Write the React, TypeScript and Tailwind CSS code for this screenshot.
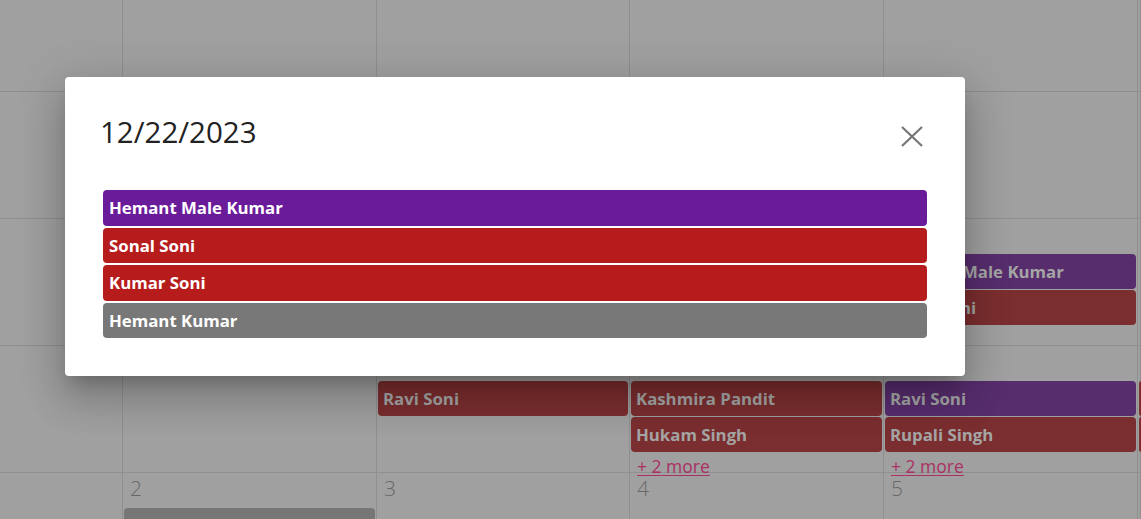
import React from "react";

type Ev = { name: string; color: "purple" | "red" | "gray" };
type Cell = { day?: number; events?: Ev[]; more?: number };

const bgColor: Record<Ev["color"], string> = {
  purple: "bg-[#572d6e]",
  red: "bg-[#7b2e2f]",
  gray: "bg-[#767676]",
};

const modalColor: Record<Ev["color"], string> = {
  purple: "bg-[#6a1b9a]",
  red: "bg-[#b71c1c]",
  gray: "bg-[#787878]",
};

const weeks: Cell[][] = [
  [{}, {}, {}, {}, {}, {}],
  [{}, {}, {}, {}, {}, {}],
  [
    {},
    {},
    {},
    {},
    {
      events: [
        { name: "Hemant Male Kumar", color: "purple" },
        { name: "Sonal Soni", color: "red" },
      ],
    },
    {},
  ],
  [
    {},
    {},
    { events: [{ name: "Ravi Soni", color: "red" }] },
    {
      events: [
        { name: "Kashmira Pandit", color: "red" },
        { name: "Hukam Singh", color: "red" },
      ],
      more: 2,
    },
    {
      events: [
        { name: "Ravi Soni", color: "purple" },
        { name: "Rupali Singh", color: "red" },
      ],
      more: 2,
    },
    {
      events: [
        { name: "", color: "red" },
        { name: "", color: "red" },
      ],
    },
  ],
  [
    {},
    { day: 2, events: [{ name: "", color: "gray" }] },
    { day: 3 },
    { day: 4 },
    { day: 5 },
    {},
  ],
];

const modalEvents: Ev[] = [
  { name: "Hemant Male Kumar", color: "purple" },
  { name: "Sonal Soni", color: "red" },
  { name: "Kumar Soni", color: "red" },
  { name: "Hemant Kumar", color: "gray" },
];

function CalendarCell({ cell, first }: { cell: Cell; first: boolean }) {
  return (
    <div className="border-r border-b border-[#8f8f8f] min-w-0 px-[1px]">
      {!first && (
        <div className="pt-[1px] h-[29px] pl-[6px] text-[21px] leading-[28px] font-light text-[#686868] whitespace-nowrap">
          {cell.day !== undefined ? cell.day : ""}
        </div>
      )}
      {cell.events && (
        <div className="mt-[6px] flex flex-col gap-[1.5px]">
          {cell.events.map((e, i) => (
            <div
              key={i}
              className={`${bgColor[e.color]} h-[34.5px] rounded-[4px] flex items-center pl-[5px] text-[16.8px] font-bold text-[#a5a5a5] whitespace-nowrap overflow-hidden`}
            >
              {e.name}
            </div>
          ))}
        </div>
      )}
      {cell.more ? (
        <div className="mt-[2px] pl-[6px] text-[17.5px] leading-[24px] text-[#aa3064] underline underline-offset-[2px] whitespace-nowrap">
          + {cell.more} more
        </div>
      ) : null}
    </div>
  );
}

function CloseIcon() {
  return (
    <svg width="22" height="21" viewBox="0 0 22 21" fill="none">
      <line x1="1" y1="1" x2="21" y2="20" stroke="#767676" strokeWidth="2.2" />
      <line x1="21" y1="1" x2="1" y2="20" stroke="#767676" strokeWidth="2.2" />
    </svg>
  );
}

export default function App() {
  return (
    <div
      className="relative w-[1141px] h-[519px] overflow-hidden bg-[#a0a0a0]"
      style={{ fontFamily: '"Open Sans", "Noto Sans", sans-serif' }}
    >
      <div className="grid grid-cols-[123px_254px_253px_254px_254px_1fr] grid-rows-[92px_127px_127px_127px_127px] h-[600px]">
        {weeks.map((week, wi) =>
          week.map((cell, ci) => (
            <CalendarCell key={`${wi}-${ci}`} cell={cell} first={wi === 0} />
          ))
        )}
      </div>

      <div className="absolute left-[65px] top-[77px] w-[900px] rounded-[4px] bg-white shadow-[0px_11px_15px_-7px_rgba(0,0,0,0.2),0px_24px_38px_3px_rgba(0,0,0,0.14),0px_9px_46px_8px_rgba(0,0,0,0.12)]">
        <div className="flex justify-between items-start pl-[35px] pr-[42px] pt-[34.5px]">
          <div className="text-[29.5px] leading-[40px] text-[#222222]">12/22/2023</div>
          <div className="mt-[14px]">
            <CloseIcon />
          </div>
        </div>
        <div className="px-[38px] pt-[38.5px] pb-[38px] flex flex-col gap-[2px]">
          {modalEvents.map((e, i) => (
            <div
              key={i}
              className={`${modalColor[e.color]} h-[35.5px] rounded-[4px] flex items-center pl-[6px] text-[16.8px] font-bold text-white whitespace-nowrap`}
            >
              {e.name}
            </div>
          ))}
        </div>
      </div>
    </div>
  );
}
